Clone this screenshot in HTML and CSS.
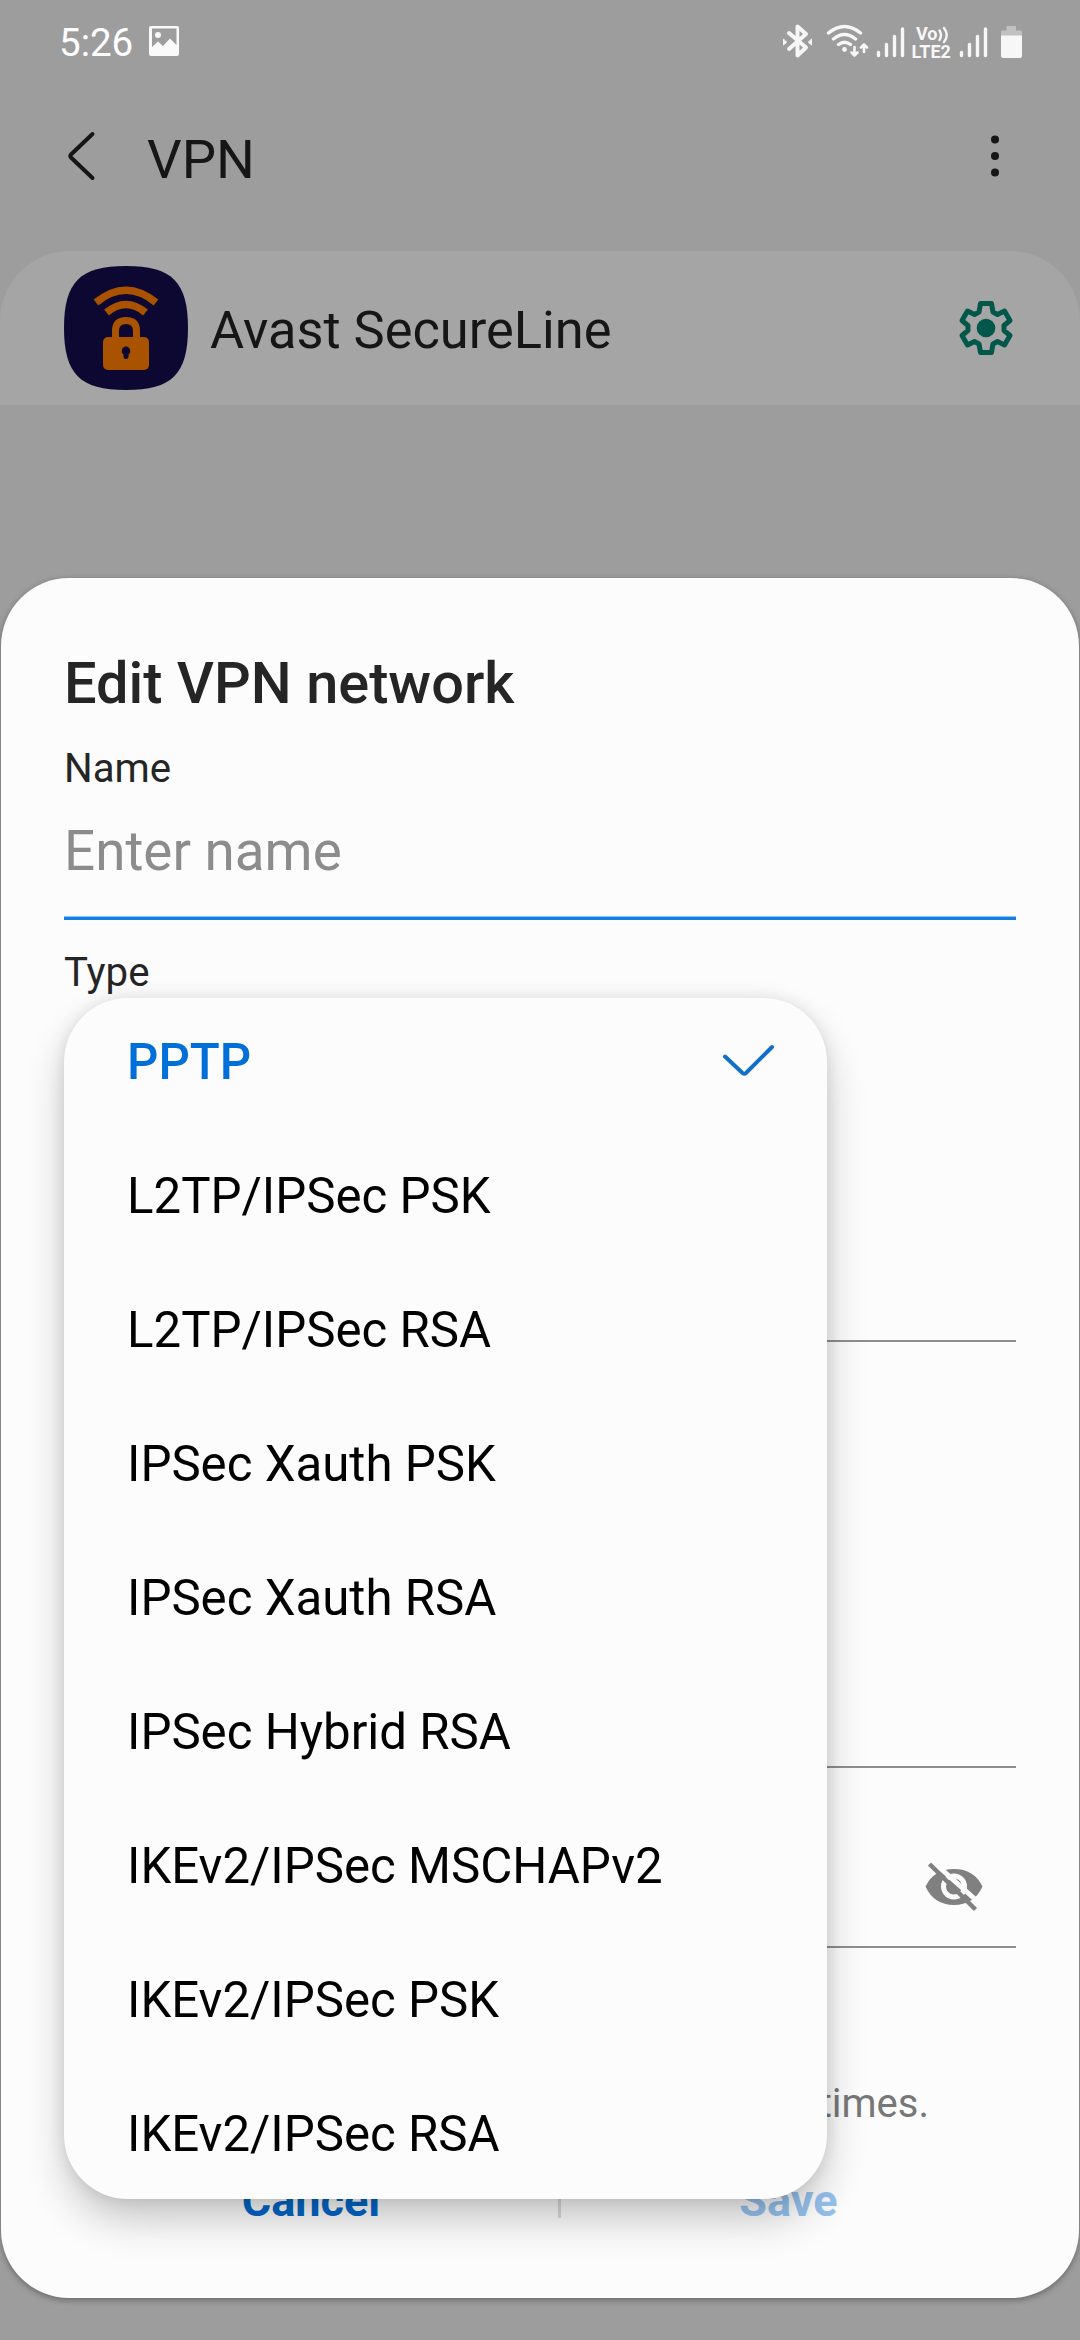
FILE: index.html
```html
<!DOCTYPE html>
<html lang="en">
<head>
<meta charset="utf-8">
<title>VPN</title>
<link rel="stylesheet" href="styles.css">
</head>
<body>
<div class="screen">
  <header class="status">
    <span class="clock">5:26</span>
    <svg class="photo" width="32" height="32" viewBox="0 0 32 32"><path fill="#fafafa" fill-rule="evenodd" d="M3 1H29Q31 1 31 3V29Q31 31 29 31H3Q1 31 1 29V3Q1 1 3 1ZM4 3.500V22L10 16.500L15 21L22 13.500L28.500 20V3.500ZM10 7A3 3 0 1 1 10 13A3 3 0 1 1 10 7Z"/></svg>
    <svg class="indicators" width="250" height="50" viewBox="0 0 250 50" fill="none" stroke="#f7f7f7" stroke-width="3.400" stroke-linecap="round" stroke-linejoin="round">
      <path d="M9 14L26 28.500L17.500 36.500V7.500L26 15L9 30" stroke-width="4"/>
      <path d="M3.500 20.500V26L6.500 23.300ZM31.500 20.500V26L28.500 23.300Z" fill="#f7f7f7" stroke-width="1"/>
      <path d="M48.500 14Q64.500 1 80.500 14M53.500 20Q64.500 11 75.500 20M58.500 25.500Q64.500 21 70.500 25.500"/>
      <circle cx="64.500" cy="30.500" r="2.400" fill="#f7f7f7" stroke="none"/>
      <path d="M74.500 28V36M71.500 33.500L74.500 36.500L77.500 33.500M84 33V25.500M81 28.500L84 25.500L87 28.500" stroke-width="2.600"/>
      <path d="M98.500 33.500V36.500M106.500 25.500V36.500M114.500 17.500V36.500M122.500 10V36.500"/>
      <path d="M181.500 33.500V36.500M189.500 25.500V36.500M197.500 17.500V36.500M205.500 10V36.500"/>
      <path d="M159.500 11.500Q162.500 16 159.500 21M164 9Q169.500 16 164 23" stroke-width="2.400"/>
      <text x="136" y="21" class="volte">Vo</text>
      <text x="131.500" y="38.500" class="volte">LTE2</text>
      <path d="M221 17V12.500Q221 11.500 222 11.500H226.500V7H236V11.500H240.500Q242 11.500 242 13V17Z" fill="#c0c0c0" stroke="none"/>
      <path d="M221 16.500H242V37Q242 39 240 39H223Q221 39 221 37Z" fill="#f7f7f7" stroke="none"/>
    </svg>
  </header>

  <div class="appbar">
    <svg class="back" width="30" height="52" viewBox="0 0 30 52"><path d="M25.500 4L4 24.500Q2.500 26 4 27.500L25.500 48" fill="none" stroke="#161616" stroke-width="4" stroke-linecap="round"/></svg>
    <h1 class="heading">VPN</h1>
    <svg class="more" width="10" height="44" viewBox="0 0 10 44" fill="#161616"><circle cx="5" cy="5.500" r="4"/><circle cx="5" cy="22" r="4"/><circle cx="5" cy="38.500" r="4"/></svg>
  </div>

  <div class="vpn-row">
    <svg width="124" height="124" viewBox="0 0 124 124">
      <path fill="#0d0832" d="M62 0C108 0 124 16 124 62S108 124 62 124S0 108 0 62S16 0 62 0Z"/>
      <g fill="none" stroke="#a95200">
        <path d="M32 36.500Q62 12 92 36.500M42.500 46.500Q62 30.500 81.500 46.500" stroke-width="7.500"/>
        <path d="M51.500 72V65Q51.500 54.500 62 54.500T72.500 65V72" stroke-width="7"/>
      </g>
      <rect x="39" y="71" width="46" height="33" rx="5" fill="#a95200"/>
      <path fill="#0d0832" d="M62 80.500A4.500 4.500 0 0 1 64.500 88.500V91Q64.500 93 62 93T59.500 91V88.500A4.500 4.500 0 0 1 62 80.500Z"/>
    </svg>
    <span class="vpn-name">Avast SecureLine</span>
    <svg class="gear" width="60" height="60" viewBox="-30 -30 60 60"><path fill="none" stroke="#01584a" stroke-width="5" stroke-linejoin="round" d="M-5.500 -24.500H5.500L7 -16L11.500 -13.500L18.500 -17L24 -7.500L18 -2.500V2.500L24 7.500L18.500 17L11.500 13.500L7 16L5.500 24.500H-5.500L-7 16L-11.500 13.500L-18.500 17L-24 7.500L-18 2.500V-2.500L-24 -7.500L-18.500 -17L-11.500 -13.500L-7 -16Z"/><circle r="9.300" fill="#01584a"/></svg>
  </div>

  <section class="dialog">
    <h2 class="title">Edit VPN network</h2>
    <div class="label">Name</div>
    <div class="field field-name">Enter name</div>
    <div class="label label-type">Type</div>
    <div class="field field-server"></div>
    <div class="field field-user"></div>
    <div class="field field-password">
      <svg width="58" height="52" viewBox="0 0 58 52">
        <path fill="#808080" d="M.5 24.500Q9 7 29 7T57.500 24.500Q49 43 29 43T.5 24.500Z"/>
        <circle cx="29" cy="24.500" r="10.500" fill="#808080" stroke="#fcfcfc" stroke-width="5"/>
        <path d="M7 -1L56 42.500" stroke="#fcfcfc" stroke-width="5"/>
        <path d="M4.500 2L50.500 47.500" stroke="#808080" stroke-width="4.500"/>
      </svg>
    </div>
    <p class="note">times.</p>
    <div class="actions">
      <span class="action cancel">Cancel</span>
      <span class="divider"></span>
      <span class="action save">Save</span>
    </div>
    <ul class="menu">
      <li class="option selected">PPTP<svg class="check" width="54" height="36" viewBox="0 0 54 36"><path d="M4 13.500L21.500 30Q23.300 31.500 25 30L51 4" fill="none" stroke="#116fc5" stroke-width="4" stroke-linecap="round"/></svg></li>
      <li class="option">L2TP/IPSec PSK</li>
      <li class="option">L2TP/IPSec RSA</li>
      <li class="option">IPSec Xauth PSK</li>
      <li class="option">IPSec Xauth RSA</li>
      <li class="option">IPSec Hybrid RSA</li>
      <li class="option">IKEv2/IPSec MSCHAPv2</li>
      <li class="option">IKEv2/IPSec PSK</li>
      <li class="option">IKEv2/IPSec RSA</li>
    </ul>
  </section>
</div>
</body>
</html>
```
FILE: styles.css
```css
* { box-sizing: border-box; margin: 0; padding: 0; }
body { font-family: Roboto, sans-serif; }
svg { display: block; flex: none; }

.screen {
  position: relative;
  width: 1080px;
  height: 2340px;
  background: #9d9d9d;
  color: #161616;
  overflow: hidden;
}

.status { display: flex; height: 84px; padding: 0 50px 0 59px; }
.clock { width: 89px; padding-top: 20px; font-size: 38.5px; line-height: 46px; color: #fff; }
.photo { margin-top: 25px; }
.indicators { margin: 19px 0 0 auto; }
.volte { font: 700 18px Roboto, sans-serif; fill: #f7f7f7; stroke: none; }

.appbar { display: flex; align-items: center; height: 144px; padding: 0 80px 0 67px; }
.heading { margin: 5px 0 0 50px; font-size: 54.5px; font-weight: 400; line-height: 64px; }
.more { margin-left: auto; }

.vpn-row {
  display: flex;
  align-items: center;
  height: 154px;
  margin-top: 23px;
  padding: 0 64px;
  border-radius: 70px 70px 0 0;
  background: #a5a5a5;
}
.vpn-name { margin-left: 22px; padding-top: 4px; font-size: 52.4px; }
.gear { margin-left: auto; }

.dialog {
  position: absolute;
  top: 578px;
  left: 1px;
  width: 1078px;
  height: 1720px;
  padding: 72px 63px 0;
  border-radius: 68px;
  background: #fcfcfc;
  color: #252525;
  box-shadow: 0 2px 6px rgba(0, 0, 0, .35);
}
.title { height: 66px; font-size: 57.7px; font-weight: 500; line-height: 66px; }
.label { height: 46px; margin-top: 30px; font-size: 40.2px; line-height: 46px; }
.field { border-bottom: 2px solid #8e8e8e; }
.field-name {
  height: 128px;
  padding-top: 27px;
  border-bottom: 3px solid #147de0;
  box-shadow: inset 0 -1px #8cc4f5;
  font-size: 54.8px;
  line-height: 64px;
  color: #8c8c8c;
}
.label-type { height: 80px; }
.field-server { height: 312px; }
.field-user { height: 426px; }
.field-password { display: flex; justify-content: flex-end; height: 180px; padding: 94px 33px 0 0; }
.note { height: 46px; margin: 133px 87px 0 0; font-size: 40px; line-height: 46px; text-align: right; color: #777; }
.actions { display: flex; align-items: center; height: 60px; margin-top: 43px; }
.action { font-size: 45px; font-weight: 700; color: #0367c8; text-align: center; }
.cancel { width: 494px; }
.save { flex: 1; color: #96c2ee; }
.divider { width: 3px; height: 36px; background: #dadada; }

.menu {
  position: absolute;
  top: 420px;
  left: 63px;
  width: 763px;
  height: 1201px;
  border-radius: 64px;
  background: #fcfcfc;
  list-style: none;
  box-shadow: 0 22px 44px -4px rgba(0, 0, 0, .24), 0 0 16px rgba(0, 0, 0, .1);
}
.option {
  display: flex;
  align-items: center;
  justify-content: space-between;
  height: 134px;
  padding: 0 52px 0 63px;
  font-size: 49.2px;
  color: #000;
}
.selected { height: 131px; padding-bottom: 3px; font-weight: 500; color: #0070d8; }
.check { margin-bottom: 3px; }
```
